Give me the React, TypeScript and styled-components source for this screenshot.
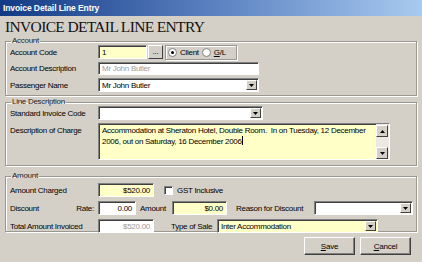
import React from 'react';
import styled, { createGlobalStyle } from 'styled-components';

const GlobalStyle = createGlobalStyle`
  html, body {
    margin: 0;
    padding: 0;
    background: #d4d0c8;
  }
  body {
    font-family: 'Liberation Sans', Arial, sans-serif;
    font-size: 8px;
    letter-spacing: -0.28px;
    color: #000;
  }
`;

const YELLOW = '#ffffc8';

const Window = styled.div`
  width: 422px;
  height: 262px;
  background: #d4d0c8;
  box-sizing: border-box;
  overflow: hidden;
`;

const TitleBar = styled.div`
  height: 16px;
  display: flex;
  align-items: center;
  padding-left: 3px;
  color: #fff;
  font-weight: bold;
  font-size: 8.5px;
  letter-spacing: -0.1px;
  background: linear-gradient(to right, #123a84 0%, #5a80c0 50%, #a8caf0 100%);
`;

const Heading = styled.h1`
  margin: 0;
  padding: 1px 0 0 5px;
  height: 20px;
  font-family: 'Liberation Serif', 'Times New Roman', serif;
  font-weight: normal;
  font-size: 15.5px;
  letter-spacing: -0.65px;
  line-height: 19px;
  color: #111;
`;

const Body = styled.div`
  padding: 0 5px 0 5px;
  display: flex;
  flex-direction: column;
`;

const Group = styled.fieldset<{ $h: number; $mt: number; $gap?: number; $pt?: number }>`
  margin: ${(p) => p.$mt}px 0 0 0;
  padding: ${(p) => p.$pt ?? 0}px 0 0 4px;
  height: ${(p) => p.$h}px;
  box-sizing: border-box;
  border: 1px solid #9a9790;
  box-shadow: 1px 1px 0 #fff, inset 1px 1px 0 #fff;
  display: flex;
  flex-direction: column;
  gap: ${(p) => p.$gap ?? 3}px;
`;

const Legend = styled.legend`
  margin-left: 1px;
  padding: 0 1px;
  font-size: 8px;
  line-height: 8px;
  color: #222;
`;

const Row = styled.div<{ $h?: number; $top?: boolean }>`
  display: flex;
  align-items: ${(p) => (p.$top ? 'flex-start' : 'center')};
  height: ${(p) => p.$h ?? 14}px;
`;

const Label = styled.span<{ $w?: number; $right?: boolean; $ml?: number; $mt?: number }>`
  width: ${(p) => (p.$w ? `${p.$w}px` : 'auto')};
  margin-left: ${(p) => p.$ml ?? 0}px;
  margin-top: ${(p) => p.$mt ?? 0}px;
  text-align: ${(p) => (p.$right ? 'right' : 'left')};
  flex-shrink: 0;
  white-space: nowrap;
`;

const Field = styled.div<{ $w: number; $bg?: string; $right?: boolean; $dim?: boolean; $ml?: number; $h?: number }>`
  width: ${(p) => p.$w}px;
  height: ${(p) => p.$h ?? 14}px;
  margin-left: ${(p) => p.$ml ?? 0}px;
  box-sizing: border-box;
  background: ${(p) => p.$bg ?? '#fff'};
  border: 1px solid;
  border-color: #808080 #fff #fff #808080;
  box-shadow: inset 1px 1px 0 #404040;
  display: flex;
  align-items: center;
  justify-content: ${(p) => (p.$right ? 'flex-end' : 'flex-start')};
  padding: 0 3px;
  color: ${(p) => (p.$dim ? '#9c9c9c' : '#000')};
  white-space: nowrap;
  overflow: hidden;
  flex-shrink: 0;
`;

const SelectBox = styled(Field)`
  padding-right: 1px;
  justify-content: space-between;
`;

const ArrowBtn = styled.div`
  width: 11px;
  height: 10px;
  box-sizing: border-box;
  background: #d4d0c8;
  border: 1px solid;
  border-color: #fff #404040 #404040 #fff;
  display: flex;
  align-items: center;
  justify-content: center;
  flex-shrink: 0;
`;

const Tri = ({ up }: { up?: boolean }) => (
  <svg width="5" height="3" viewBox="0 0 5 3">
    <path d={up ? 'M2.5 0 L5 3 L0 3 Z' : 'M0 0 L5 0 L2.5 3 Z'} fill="#000" />
  </svg>
);

const Select = ({ w, bg, text, ml }: { w: number; bg?: string; text?: string; ml?: number }) => (
  <SelectBox $w={w} $bg={bg} $ml={ml}>
    <span>{text}</span>
    <ArrowBtn>
      <Tri />
    </ArrowBtn>
  </SelectBox>
);

const SmallButton = styled.div`
  width: 15px;
  height: 14px;
  margin-left: 1px;
  box-sizing: border-box;
  border: 1px solid;
  border-color: #fff #404040 #404040 #fff;
  display: flex;
  align-items: center;
  justify-content: center;
  font-size: 8px;
  padding-bottom: 2px;
  flex-shrink: 0;
`;

const RadioGroup = styled.div`
  margin-left: 2px;
  width: 72px;
  height: 15px;
  box-sizing: border-box;
  border: 1px solid #9a9790;
  box-shadow: 1px 1px 0 #fff, inset 1px 1px 0 #fff;
  display: flex;
  align-items: center;
  padding-left: 2px;
  flex-shrink: 0;
`;

const Radio = styled.span<{ $on?: boolean; $ml?: number }>`
  width: 7px;
  height: 7px;
  border-radius: 50%;
  background: #fff;
  border: 1px solid #808080;
  display: inline-flex;
  align-items: center;
  justify-content: center;
  margin: 0 3px 0 ${(p) => p.$ml ?? 0}px;
  &::after {
    content: '';
    width: 3px;
    height: 3px;
    border-radius: 50%;
    background: ${(p) => (p.$on ? '#000' : 'transparent')};
  }
`;

const Check = styled.span`
  width: 9px;
  height: 9px;
  margin-left: 10px;
  margin-right: 4px;
  box-sizing: border-box;
  background: #fff;
  border: 1px solid;
  border-color: #808080 #fff #fff #808080;
  box-shadow: inset 1px 1px 0 #404040;
  flex-shrink: 0;
`;

const TextArea = styled(Field)`
  align-items: stretch;
  padding: 0;
  white-space: normal;
  background: ${YELLOW};
`;

const AreaText = styled.div`
  flex: 1;
  padding: 2px 2px 2px 3px;
  line-height: 10px;
`;

const ScrollBar = styled.div`
  width: 13px;
  display: flex;
  flex-direction: column;
  justify-content: space-between;
  background: #ece9e2;
  padding: 1px 0 0 0;
`;

const ScrollBtn = styled(ArrowBtn)`
  width: 12px;
  height: 12px;
`;

const Caret = styled.span`
  display: inline-block;
  width: 1px;
  height: 9px;
  background: #000;
  vertical-align: -1px;
`;

const Footer = styled.div`
  display: flex;
  justify-content: flex-end;
  gap: 5px;
  padding: 5px 6px 0 0;
`;

const Button = styled.button`
  width: 51px;
  height: 18px;
  background: #d4d0c8;
  border: 1px solid;
  border-color: #fff #404040 #404040 #fff;
  box-shadow: inset -1px -1px 0 #808080;
  font-family: 'Liberation Sans', Arial, sans-serif;
  font-size: 8px;
  letter-spacing: -0.2px;
  padding: 0;
  color: #000;
`;

const App = () => {
  return (
    <Window>
      <GlobalStyle />
      <TitleBar>Invoice Detail Line Entry</TitleBar>
      <Heading>INVOICE DETAIL LINE ENTRY</Heading>
      <Body>
        <Group $h={59} $mt={0}>
          <Legend>Account</Legend>
          <Row>
            <Label $w={88}>Account Code</Label>
            <Field $w={49} $bg={YELLOW}>1</Field>
            <SmallButton>...</SmallButton>
            <RadioGroup>
              <Radio $on />
              <Label>Client</Label>
              <Radio $ml={3} />
              <Label>
                <u>G</u>/L
              </Label>
            </RadioGroup>
          </Row>
          <Row $h={13}>
            <Label $w={88}>Account Description</Label>
            <Field $w={161} $h={13} $dim>
              Mr John Butler
            </Field>
          </Row>
          <Row>
            <Label $w={88}>Passenger Name</Label>
            <Select w={161} text="Mr John Butler" />
          </Row>
        </Group>

        <Group $h={68} $mt={2}>
          <Legend>Line Description</Legend>
          <Row>
            <Label $w={88}>Standard Invoice Code</Label>
            <Select w={165} />
          </Row>
          <Row $h={37} $top>
            <Label $w={88} $mt={3}>
              Description of Charge
            </Label>
            <TextArea $w={292} $h={37}>
              <AreaText>
                Accommodation at Sheraton Hotel, Double Room.&nbsp; In on Tuesday, 12 December 2006, out on
                Saturday, 16 December 2006
                <Caret />
              </AreaText>
              <ScrollBar>
                <ScrollBtn>
                  <Tri up />
                </ScrollBtn>
                <ScrollBtn>
                  <Tri />
                </ScrollBtn>
              </ScrollBar>
            </TextArea>
          </Row>
        </Group>

        <Group $h={60} $mt={6} $gap={4} $pt={3}>
          <Legend>Amount</Legend>
          <Row>
            <Label $w={88}>Amount Charged</Label>
            <Field $w={56} $bg={YELLOW} $right>
              $520.00
            </Field>
            <Check />
            <Label>GST Inclusive</Label>
          </Row>
          <Row>
            <Label $w={60}>Discount</Label>
            <Label $w={24} $right>
              Rate:
            </Label>
            <Field $w={38} $ml={4} $right>
              0.00
            </Field>
            <Label $w={32} $ml={4}>
              Amount
            </Label>
            <Field $w={55} $bg={YELLOW} $right>
              $0.00
            </Field>
            <Label $w={78} $ml={9}>
              Reason for Discount
            </Label>
            <Select w={99} />
          </Row>
          <Row>
            <Label $w={88}>Total Amount Invoiced</Label>
            <Field $w={56} $right $dim>
              $520.00
            </Field>
            <Label $w={46} $ml={17}>
              Type of Sale
            </Label>
            <Select w={161} bg={YELLOW} text="Inter Accommodation" />
          </Row>
        </Group>

        <Footer>
          <Button>
            <u>S</u>ave
          </Button>
          <Button>
            <u>C</u>ancel
          </Button>
        </Footer>
      </Body>
    </Window>
  );
};

export default App;
